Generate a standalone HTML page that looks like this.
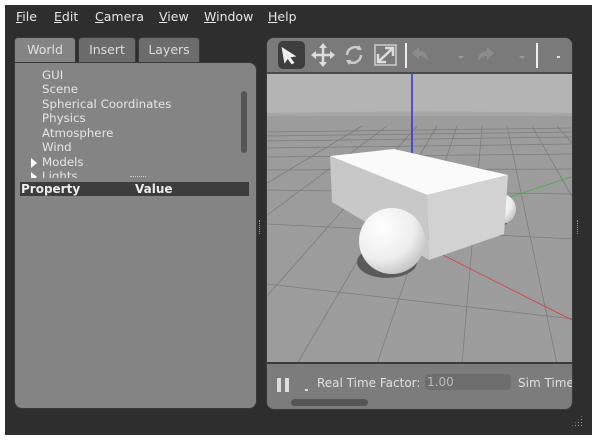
<!DOCTYPE html>
<html><head><style>
body{margin:0;width:600px;height:444px;background:#fff;position:relative;overflow:hidden;font-family:"DejaVu Sans","Liberation Sans",sans-serif;}
#win{position:absolute;left:5px;top:5px;width:587px;height:430px;background:#2e2e2e;}
.menu{position:absolute;top:4px;color:#e6e6e6;font-size:12.5px}
.menu u{text-decoration:underline}
.tab{position:absolute;top:32px;height:25px;border-radius:4px 4px 0 0;font-size:12.5px;color:#dcdcdc;text-align:center;line-height:24px;box-sizing:border-box;border:1px solid #3a3a3a;border-bottom:none}
#lp{position:absolute;left:9px;top:57px;width:243px;height:347px;background:#848484;border-radius:0 8px 8px 8px;border:1px solid #3a3a3a;box-sizing:border-box}
.it{position:absolute;left:27px;color:#e6e6e6;font-size:11.8px}
#rp{position:absolute;left:261px;top:32px;width:307px;height:373px;background:#7c7c7c;border-radius:8px;overflow:hidden;border:1px solid #3a3a3a;box-sizing:border-box}
</style></head><body>
<div id="win">
<div class="menu" style="left:11px"><u>F</u>ile</div>
<div class="menu" style="left:49px"><u>E</u>dit</div>
<div class="menu" style="left:90px"><u>C</u>amera</div>
<div class="menu" style="left:154px"><u>V</u>iew</div>
<div class="menu" style="left:199px"><u>W</u>indow</div>
<div class="menu" style="left:263px"><u>H</u>elp</div>

<div class="tab" style="left:9px;width:62px;background:#848484;height:26px;color:#e0e0e0">World</div>
<div class="tab" style="left:73px;width:58px;background:#6c6c6c">Insert</div>
<div class="tab" style="left:133px;width:62px;background:#6c6c6c">Layers</div>
<div id="lp">
<div class="it" style="top:5px">GUI</div>
<div class="it" style="top:19px">Scene</div>
<div class="it" style="top:34px">Spherical Coordinates</div>
<div class="it" style="top:48px">Physics</div>
<div class="it" style="top:63px">Atmosphere</div>
<div class="it" style="top:77px">Wind</div>
<div class="it" style="top:92px">Models</div>
<div style="position:absolute;left:16px;top:95px;width:0;height:0;border-left:6px solid #fff;border-top:5px solid transparent;border-bottom:5px solid transparent"></div>
<div style="position:absolute;left:0;top:106px;width:240px;height:9px;overflow:hidden"><div class="it" style="top:0">Lights</div><div style="position:absolute;left:16px;top:3px;width:0;height:0;border-left:6px solid #fff;border-top:5px solid transparent;border-bottom:5px solid transparent"></div></div>
<div style="position:absolute;left:115px;top:113px;width:16px;height:1px;border-top:1px dotted #ccc"></div>
<div style="position:absolute;left:226px;top:28px;width:6px;height:62px;background:#555;border-radius:3px"></div>
<div style="position:absolute;left:5px;top:119px;width:229px;height:14px;background:#3c3c3c;color:#ececec;font-weight:bold;font-size:12px;line-height:14px"><span style="position:absolute;left:1px">Property</span><span style="position:absolute;left:115px">Value</span></div>
</div>
<div style="position:absolute;left:254px;top:215px;width:2px;height:14px;border-left:1px dotted #999"></div>
<div style="position:absolute;left:572px;top:215px;width:2px;height:14px;border-left:1px dotted #999"></div>

<div id="rp">
<div style="position:absolute;left:0;top:0;width:307px;height:34px;background:#7a7a7a;border-bottom:2px solid #4a4a4a"></div>
<svg style="position:absolute;left:0;top:0" width="307" height="34">
<rect x="11" y="3" width="27" height="28" rx="5" fill="#3e3e3e"/>
<path d="M16 8 L16 25 L20 21 L23 27 L26 26 L23 20 L29 20 Z" fill="#eee" transform="rotate(-10 20 17)"/>
<g stroke="#ddd" stroke-width="2.5" fill="none"><path d="M56 8V26M47 17H65"/></g>
<g fill="#ddd"><path d="M56 5l4 5h-8zM56 29l4-5h-8zM44 17l5-4v8zM68 17l-5-4v8z"/></g>
<path d="M80 17a8 8 0 0 1 13-6M94 17a8 8 0 0 1-13 6" stroke="#ccc" stroke-width="2.5" fill="none"/>
<path d="M92 7l3 5-5 0zM82 27l-3-5 5 0z" fill="#ccc"/>
<rect x="108" y="7" width="21" height="20" fill="none" stroke="#ccc" stroke-width="1.5"/>
<path d="M111 24l15-14M118 10h8v8M111 16v8h8" stroke="#ddd" stroke-width="2.5" fill="none"/>
<rect x="138" y="5" width="2" height="25" fill="#eee"/>
<path d="M145 15l7-6v4c6 0 9 4 9 10c-2-3-5-5-9-5v4z" fill="#8c8c8c"/>
<path d="M191 18l3 3 3-3z" fill="#999"/>
<path d="M227 15l-7-6v4c-6 0-9 4-9 10c2-3 5-5 9-5v4z" fill="#8c8c8c"/>
<path d="M252 18l3 3 3-3z" fill="#999"/>
<rect x="269" y="5" width="2" height="25" fill="#eee"/>
<rect x="290" y="18" width="3" height="2" fill="#ddd"/>
</svg>
<svg style="position:absolute;left:0;top:36px" width="307" height="290">
<rect width="307" height="290" fill="#9c9c9c"/>
<rect width="307" height="39" fill="#b4b4b4"/>
<path d="M0 39 Q150 36 307 39 L307 42 L0 42Z" fill="#a6a6a6"/>
<g stroke="#7c7c7c" stroke-width="0.8" fill="none">
<path d="M0 58 L307 54M0 62L307 58M0 67L307 63M0 74L307 70M0 83L307 80M0 96L307 95M0 116L307 120M0 150L307 165M0 210L307 245"/>
<path d="M150 52L-60 290M170 52L30 290M190 52L110 290M215 52L195 290M240 52L290 290M265 52L400 290M290 52L500 290M120 52L-200 290M95 52L-300 290M310 55L560 290"/>
</g>
<path d="M164 175 L307 247" stroke="#d04040" stroke-width="0.8"/>
<path d="M240 124 L307 102" stroke="#40b040" stroke-width="0.8"/>
<line x1="145" y1="0" x2="145" y2="92" stroke="#3030e0" stroke-width="1.5"/>
<defs><radialGradient id="g" cx="0.35" cy="0.3" r="0.8"><stop offset="0" stop-color="#fff"/><stop offset="0.6" stop-color="#eee"/><stop offset="1" stop-color="#bbb"/></radialGradient></defs>
<path d="M70 125 L170 170 L240 150 L235 120 L165 150Z" fill="#5a5a5a"/>
<ellipse cx="120" cy="188" rx="30" ry="16" fill="#5a5a5a"/>
<circle cx="234" cy="135" r="15" fill="url(#g)"/>
<path d="M63 82 L127 75 L241 101 L160 121Z" fill="#fafafa"/>
<path d="M63 82 L160 121 L162 186 L65 128Z" fill="#c8c8c8"/>
<path d="M160 121 L241 101 L237 160 L162 186Z" fill="#d2d2d2"/>
<circle cx="125" cy="167" r="33" fill="url(#g)"/>
</svg>
<div style="position:absolute;left:0;top:324px;width:307px;height:2px;background:#3a3a3a"></div>
<div style="position:absolute;left:10px;top:340px;width:4px;height:14px;background:#ddd"></div>
<div style="position:absolute;left:18px;top:340px;width:4px;height:14px;background:#ddd"></div>
<div style="position:absolute;left:38px;top:351px;width:3px;height:2px;background:#ddd"></div>
<div style="position:absolute;left:50px;top:338px;color:#e0e0e0;font-size:12px;white-space:nowrap">Real Time Factor:</div>
<div style="position:absolute;left:158px;top:336px;width:86px;height:16px;background:#6e6e6e;border-radius:4px;color:#bbb;font-size:12px;line-height:16px;padding-left:2px;box-sizing:border-box">1.00</div>
<div style="position:absolute;left:251px;top:338px;color:#e0e0e0;font-size:12px;white-space:nowrap">Sim Time</div>
<div style="position:absolute;left:24px;top:361px;width:77px;height:7px;background:#555;border-radius:4px"></div>
</div>
<div style="position:absolute;left:566px;top:410px;width:12px;height:12px;background:radial-gradient(#999 0.6px,transparent 0.8px) 0 0/3px 3px;clip-path:polygon(100% 0,100% 100%,0 100%)"></div>
</div>
</body></html>
